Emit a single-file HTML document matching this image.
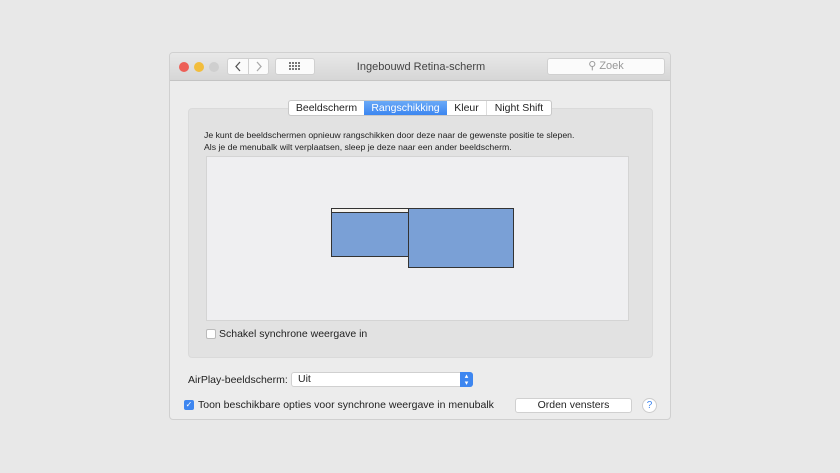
<!DOCTYPE html><html><head><style>
*{margin:0;padding:0;box-sizing:border-box}
body{width:840px;height:473px;background:#e8e8e8;font-family:"Liberation Sans",sans-serif;font-size:10px;color:#222;position:relative;overflow:hidden}
.a{position:absolute}
</style></head><body>
<div class="a" style="left:169px;top:52px;width:502px;height:368px;background:#ececec;border:1px solid #d0d0d0;border-radius:4px;overflow:hidden">
 <div class="a" style="left:0;top:0;width:502px;height:28px;background:linear-gradient(#e8e8e8,#d6d6d6);border-bottom:1px solid #c4c4c4"></div>
 <div class="a" style="left:9px;top:9px;width:10px;height:10px;border-radius:50%;background:#ed5f57"></div>
 <div class="a" style="left:24px;top:9px;width:10px;height:10px;border-radius:50%;background:#f2bd3c"></div>
 <div class="a" style="left:39px;top:9px;width:10px;height:10px;border-radius:50%;background:#cfcfcf"></div>
 <div class="a" style="left:57px;top:5px;width:42px;height:17px;background:#fbfbfb;border-radius:3px;border:1px solid #d0d0d0"></div>
 <div class="a" style="left:78px;top:5px;width:1px;height:17px;background:#d0d0d0"></div>
 <svg class="a" style="left:64px;top:8px" width="8" height="11"><path d="M6 1 L2 5.5 L6 10" stroke="#555" stroke-width="1.3" fill="none"/></svg>
 <svg class="a" style="left:85px;top:8px" width="8" height="11"><path d="M2 1 L6 5.5 L2 10" stroke="#aaa" stroke-width="1.3" fill="none"/></svg>
 <div class="a" style="left:105px;top:5px;width:40px;height:17px;background:#fbfbfb;border-radius:3px;border:1px solid #d0d0d0"></div>
 <svg class="a" style="left:119px;top:9px" width="12" height="9"><g fill="#777"><rect x="0" y="0" width="2" height="2"/><rect x="3" y="0" width="2" height="2"/><rect x="6" y="0" width="2" height="2"/><rect x="9" y="0" width="2" height="2"/><rect x="0" y="3" width="2" height="2"/><rect x="3" y="3" width="2" height="2"/><rect x="6" y="3" width="2" height="2"/><rect x="9" y="3" width="2" height="2"/><rect x="0" y="6" width="2" height="2"/><rect x="3" y="6" width="2" height="2"/><rect x="6" y="6" width="2" height="2"/><rect x="9" y="6" width="2" height="2"/></g></svg>
 <div class="a" style="left:0;top:8px;width:502px;text-align:center;font-size:11px;color:#444">Ingebouwd Retina-scherm</div>
 <div class="a" style="left:377px;top:5px;width:118px;height:17px;background:#fbfbfb;border-radius:3px;border:1px solid #d0d0d0;text-align:center;color:#999;font-size:11px;line-height:15px">⚲ Zoek</div>
 <div class="a" style="left:18px;top:55px;width:465px;height:250px;background:#e2e2e2;border-radius:4px;border:1px solid #dadada"></div>
 <div class="a" style="left:118px;top:47px;height:16px;background:#fff;border:1px solid #c8c8c8;border-radius:3px;display:flex;font-size:10.5px;line-height:14px;overflow:hidden">
  <div style="width:75px;text-align:center">Beeldscherm</div>
  <div style="width:83px;text-align:center;background:linear-gradient(#6aa9f7,#3c86f0);color:#fff">Rangschikking</div>
  <div style="width:39px;text-align:center">Kleur</div>
  <div style="width:65px;text-align:center;border-left:1px solid #ddd">Night Shift</div>
 </div>
 <div class="a" style="left:34px;top:77px;font-size:8.7px;line-height:11.5px;color:#222">Je kunt de beeldschermen opnieuw rangschikken door deze naar de gewenste positie te slepen.<br>Als je de menubalk wilt verplaatsen, sleep je deze naar een ander beeldscherm.</div>
 <div class="a" style="left:36px;top:103px;width:423px;height:165px;background:#efeff1;border:1px solid #d4d4d4"></div>
 <div class="a" style="left:161px;top:155px;width:79px;height:49px;background:#7aa0d6;border:1px solid #333">
  <div class="a" style="left:0;top:0;width:77px;height:4px;background:#f7f4ef;border-bottom:1px solid #333"></div>
 </div>
 <div class="a" style="left:238px;top:155px;width:106px;height:60px;background:#7aa0d6;border:1px solid #333"></div>
 <div class="a" style="left:36px;top:276px;width:10px;height:10px;background:#fff;border:1px solid #bbb;border-radius:2px"></div>
 <div class="a" style="left:49px;top:275px;font-size:10.5px">Schakel synchrone weergave in</div>
 <div class="a" style="left:18px;top:321px;font-size:10.5px">AirPlay-beeldscherm:</div>
 <div class="a" style="left:121px;top:319px;width:182px;height:15px;background:#fff;border:1px solid #d0d0d0;border-radius:3px;font-size:10.5px;line-height:13px;padding-left:6px">Uit</div>
 <div class="a" style="left:290px;top:319px;width:13px;height:15px;background:#3d86f0;border-radius:0 3px 3px 0;color:#fff;font-size:7px;line-height:7px;text-align:center;padding-top:1px">▴<br>▾</div>
 <div class="a" style="left:14px;top:347px;width:10px;height:10px;background:#3d86f0;border-radius:2px;color:#fff;font-size:8px;line-height:10px;text-align:center">✓</div>
 <div class="a" style="left:28px;top:346px;font-size:10.5px">Toon beschikbare opties voor synchrone weergave in menubalk</div>
 <div class="a" style="left:345px;top:345px;width:117px;height:15px;background:#fff;border:1px solid #d0d0d0;border-radius:3px;font-size:10.5px;line-height:13px;text-align:center">Orden vensters</div>
 <div class="a" style="left:472px;top:345px;width:15px;height:15px;background:#fff;border:1px solid #ccc;border-radius:50%;font-size:10px;line-height:13px;text-align:center;color:#3d86f0">?</div>
</div>
</body></html>
